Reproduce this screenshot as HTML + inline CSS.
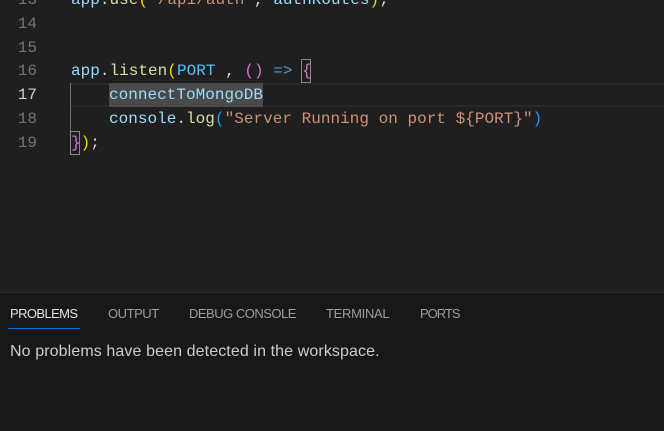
<!DOCTYPE html>
<html>
<head>
<meta charset="utf-8">
<style>
html,body{margin:0;padding:0;width:664px;height:431px;overflow:hidden;background:#1f1f1f}
.a{position:absolute}
.code{font:16px/24px "Liberation Mono",monospace;white-space:pre;letter-spacing:.025px;color:#9cdcfe}
.ln{color:#6e7681;text-align:right;left:0;width:37px;white-space:pre;font:16px/24px "Liberation Mono",monospace}
.y{color:#ffd700}.p{color:#da70d6}.b{color:#179fff}.o{color:#ce9178}.w{color:#d4d4d4}.k{color:#569cd6}.f{color:#dcdcaa}.c{color:#4fc1ff}
.tab{position:absolute;top:306px;font:13px/16px "Liberation Sans",sans-serif;color:#9d9d9d;white-space:pre}
</style>
</head>
<body>
<div class="a" style="left:71px;top:83px;width:593px;height:2px;background:#282828"></div>
<div class="a" style="left:71px;top:105px;width:593px;height:2px;background:#282828"></div>
<div class="a" style="left:109px;top:83px;width:154px;height:24px;background:#4a4a4a"></div>
<div class="a" style="left:70px;top:83px;width:1px;height:48px;background:#707070"></div>
<div class="a" style="left:301px;top:59px;width:8px;height:22px;border:1px solid #888"></div>
<div class="a" style="left:70px;top:131px;width:8px;height:22px;border:1px solid #888"></div>

<div class="a ln" style="top:-12px">13</div>
<div class="a ln" style="top:12px">14</div>
<div class="a ln" style="top:36px">15</div>
<div class="a ln" style="top:59px">16</div>
<div class="a ln" style="top:83px;color:#ccc">17</div>
<div class="a ln" style="top:107px">18</div>
<div class="a ln" style="top:131px">19</div>

<div class="a code" style="left:71px;top:-12px">app<span class="w">.</span><span class="f">use</span><span class="y">(</span><span class="o">"/api/auth"</span><span class="w">, </span>authRoutes<span class="y">)</span><span class="w">;</span></div>
<div class="a code" style="left:71px;top:59px">app<span class="w">.</span><span class="f">listen</span><span class="y">(</span><span class="c">PORT</span><span class="w"> , </span><span class="p">()</span><span class="k"> =&gt; </span><span class="p">{</span></div>
<div class="a code" style="left:109px;top:83px">connectToMongoDB</div>
<div class="a code" style="left:109px;top:107px">console<span class="w">.</span><span class="f">log</span><span class="b">(</span><span class="o">"Server Running on port ${PORT}"</span><span class="b">)</span></div>
<div class="a code" style="left:71px;top:131px"><span class="p">}</span><span class="y">)</span><span class="w">;</span></div>

<div class="a" style="left:0;top:292px;width:664px;height:139px;background:#181818;border-top:1px solid #2b2b2b;box-sizing:border-box"></div>
<div class="tab" style="left:10px;color:#e0e0e0;letter-spacing:-.6px">PROBLEMS</div>
<div class="tab" style="left:108px;letter-spacing:-.45px">OUTPUT</div>
<div class="tab" style="left:189px;letter-spacing:-.5px">DEBUG CONSOLE</div>
<div class="tab" style="left:326px;letter-spacing:-.3px">TERMINAL</div>
<div class="tab" style="left:420px;letter-spacing:-1px">PORTS</div>
<div class="a" style="left:8px;top:328px;width:72px;height:1px;background:#0078d4"></div>
<div class="a" style="left:10px;top:343px;font:16px/18px 'Liberation Sans',sans-serif;color:#cccccc;white-space:pre;letter-spacing:.105px">No problems have been detected in the workspace.</div>
</body>
</html>
